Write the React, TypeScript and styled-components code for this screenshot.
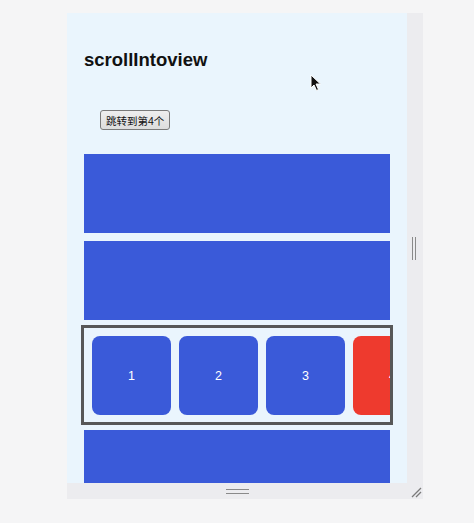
import React from "react";
import styled, { createGlobalStyle } from "styled-components";

const GlobalStyle = createGlobalStyle`
  html, body {
    margin: 0;
    padding: 0;
    background: #f5f5f6;
    font-family: "Liberation Sans", "Noto Sans CJK SC", Arial, sans-serif;
  }
`;

const Page = styled.div`
  padding: 13px 0 0 67px;
  height: 523px;
  box-sizing: border-box;
`;

const Frame = styled.div`
  display: grid;
  grid-template-columns: 340px 16px;
  grid-template-rows: 470px 16px;
  width: 356px;
  background: #ececef;
`;

const Panel = styled.div`
  position: relative;
  overflow: hidden;
  background: #eaf5fd;
  padding: 0 17px;
  box-sizing: border-box;
`;

const Title = styled.h2`
  margin: 36px 0 0;
  font-size: 18.5px;
  line-height: 22px;
  font-weight: 700;
  color: #111;
`;

const ButtonRow = styled.div`
  padding: 39px 0 0 16px;
`;

const JumpButton = styled.button`
  height: 20px;
  padding: 0 5px;
  font-family: "Liberation Sans", "Noto Sans CJK SC", sans-serif;
  font-size: 10.5px;
  color: #111;
  background: linear-gradient(#eeeeee, #dddddd);
  border: 1px solid #7a7a7a;
  border-radius: 3px;
`;

const Blocks = styled.div`
  display: flex;
  flex-direction: column;
  gap: 8px;
  margin-top: 24px;
`;

const Block = styled.div`
  height: 79px;
  flex: 0 0 auto;
  background: #3a5ad9;
`;

const Scroller = styled.div`
  display: flex;
  gap: 8px;
  padding: 8px 8px 7px;
  outline: 3px solid #575757;
  overflow-x: auto;
  scrollbar-width: none;
  &::-webkit-scrollbar {
    display: none;
  }
`;

const Item = styled.div<{ $active?: boolean }>`
  flex: 0 0 79px;
  height: 79px;
  border-radius: 8px;
  display: flex;
  align-items: center;
  justify-content: center;
  font-size: 12.5px;
  color: #fff;
  background: ${(p) => (p.$active ? "#ee3a2e" : "#3a5ad9")};
`;

const Cursor = styled.svg`
  position: absolute;
  left: 243px;
  top: 61px;
`;

const SideStrip = styled.div`
  display: flex;
  align-items: center;
  justify-content: center;
  background: #ececef;
`;

const VHandle = styled.div`
  width: 2px;
  height: 23px;
  border-left: 1.5px solid #8a8a8a;
  border-right: 1.5px solid #8a8a8a;
  margin-right: 2px;
`;

const BottomStrip = styled.div`
  display: flex;
  align-items: center;
  justify-content: center;
  background: #ececef;
`;

const HHandle = styled.div`
  width: 23px;
  height: 2.5px;
  border-top: 1.5px solid #8a8a8a;
  border-bottom: 1.5px solid #8a8a8a;
  margin-top: 1px;
`;

const Corner = styled.div`
  display: flex;
  align-items: flex-end;
  justify-content: flex-end;
  background: #ececef;
`;

const items = [1, 2, 3, 4, 5];

const App = () => {
  return (
    <>
      <GlobalStyle />
      <Page>
        <Frame>
          <Panel>
            <Title>scrollIntoview</Title>
            <ButtonRow>
              <JumpButton>跳转到第4个</JumpButton>
            </ButtonRow>
            <Blocks>
              <Block />
              <Block />
              <Scroller>
                {items.map((n) => (
                  <Item key={n} $active={n === 4}>
                    {n}
                  </Item>
                ))}
              </Scroller>
              <Block />
              <Block />
            </Blocks>
            <Cursor width="12" height="18" viewBox="0 0 12 18">
              <path
                d="M1 1 L1 14 L4 11 L6.5 16.5 L8.5 15.5 L6 10 L10.5 10 Z"
                fill="#111"
                stroke="#fff"
                strokeWidth="1"
                strokeLinejoin="round"
              />
            </Cursor>
          </Panel>
          <SideStrip>
            <VHandle />
          </SideStrip>
          <BottomStrip>
            <HHandle />
          </BottomStrip>
          <Corner>
            <svg width="14" height="14" viewBox="0 0 14 14">
              <path d="M3 12 L12 3 M7 12 L12 7" stroke="#7a7a7a" strokeWidth="1.3" />
            </svg>
          </Corner>
        </Frame>
      </Page>
    </>
  );
};

export default App;
